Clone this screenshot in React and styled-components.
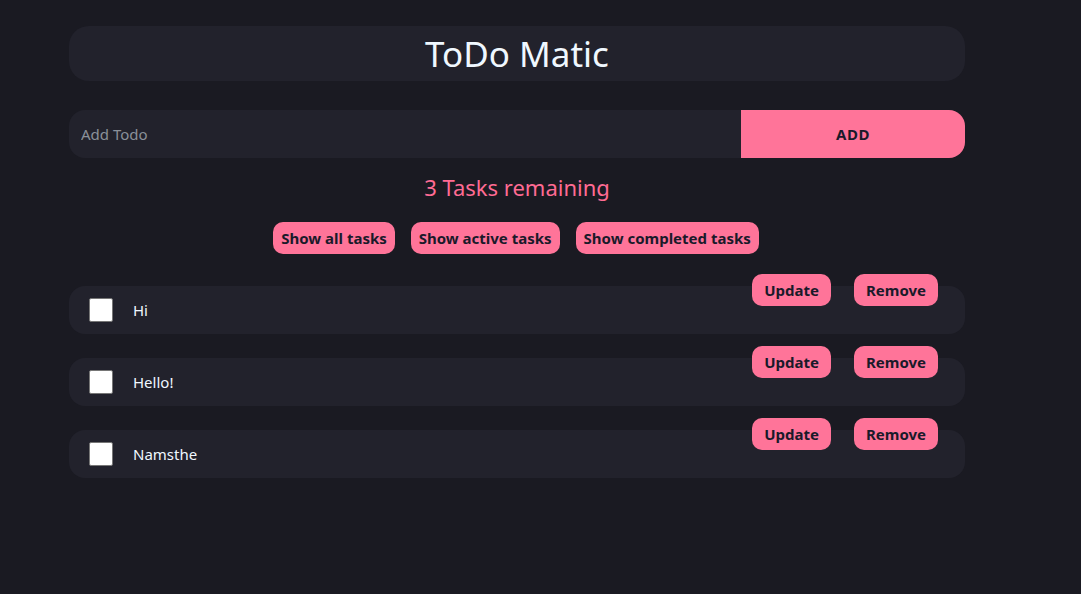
import React from "react";
import styled, { createGlobalStyle } from "styled-components";

const Global = createGlobalStyle`
  html, body { margin: 0; padding: 0; background: #1a1a22; }
  body { font-family: "Noto Sans", "Open Sans", sans-serif; color: #f0f8ff; }
  * { box-sizing: border-box; }
`;

const Page = styled.div`
  min-height: 594px;
  padding: 26px 0 0 69px;
`;

const Container = styled.div`
  width: 896px;
  display: flex;
  flex-direction: column;
`;

const TitleCard = styled.h1`
  margin: 0;
  height: 55px;
  border-radius: 20px;
  background: #22222c;
  display: flex;
  align-items: center;
  justify-content: center;
  font-size: 35px;
  font-weight: 400;
  color: #f0f8ff;
`;

const Form = styled.form`
  margin-top: 29px;
  display: flex;
  height: 48px;
`;

const Input = styled.input`
  flex: 1;
  border: none;
  outline: none;
  background: #22222c;
  border-radius: 16px 0 0 16px;
  padding: 0 12px;
  font-family: inherit;
  font-size: 15px;
  color: #f0f8ff;
  &::placeholder { color: #8a9099; }
`;

const AddButton = styled.button`
  width: 224px;
  border: none;
  background: #ff7499;
  border-radius: 0 16px 16px 0;
  font-family: inherit;
  font-weight: 700;
  font-size: 15px;
  color: #1a1a2a;
  letter-spacing: 0.5px;
`;

const Remaining = styled.h2`
  margin: 14px 0 0;
  text-align: center;
  font-size: 22px;
  font-weight: 400;
  color: #ff6b93;
  line-height: 30px;
`;

const Filters = styled.div`
  margin-top: 20px;
  display: flex;
  justify-content: center;
  gap: 16px;
  padding-right: 2px;
`;

const Pill = styled.button`
  height: 32px;
  padding: 0 ${(p) => p.$pad || 8}px;
  border: none;
  border-radius: 10px;
  background: #ff7499;
  font-family: inherit;
  font-weight: 700;
  font-size: 15px;
  color: #1a1a2a;
  white-space: nowrap;
`;

const List = styled.ul`
  list-style: none;
  margin: 32px 0 0;
  padding: 0;
  display: flex;
  flex-direction: column;
  gap: 24px;
`;

const Row = styled.li`
  height: 48px;
  background: #22222c;
  border-radius: 16px;
  display: flex;
  align-items: center;
  padding: 0 27px 0 20px;
`;

const Box = styled.span`
  width: 24px;
  height: 24px;
  background: #fff;
  border: 1px solid #767676;
  border-radius: 2px;
  flex-shrink: 0;
`;

const Label = styled.span`
  margin-left: 20px;
  font-size: 15px;
  color: #f0f8ff;
  flex: 1;
`;

const Actions = styled.div`
  align-self: flex-start;
  margin-top: -12px;
  display: flex;
  gap: 23px;
`;

const tasks = ["Hi", "Hello!", "Namsthe"];

export default function App() {
  return (
    <>
      <Global />
      <Page>
        <Container>
          <TitleCard>ToDo Matic</TitleCard>
          <Form onSubmit={(e) => e.preventDefault()}>
            <Input placeholder="Add Todo" />
            <AddButton type="submit">ADD</AddButton>
          </Form>
          <Remaining>3 Tasks remaining</Remaining>
          <Filters>
            <Pill>Show all tasks</Pill>
            <Pill>Show active tasks</Pill>
            <Pill>Show completed tasks</Pill>
          </Filters>
          <List>
            {tasks.map((t) => (
              <Row key={t}>
                <Box />
                <Label>{t}</Label>
                <Actions>
                  <Pill $pad={12}>Update</Pill>
                  <Pill $pad={12}>Remove</Pill>
                </Actions>
              </Row>
            ))}
          </List>
        </Container>
      </Page>
    </>
  );
}
